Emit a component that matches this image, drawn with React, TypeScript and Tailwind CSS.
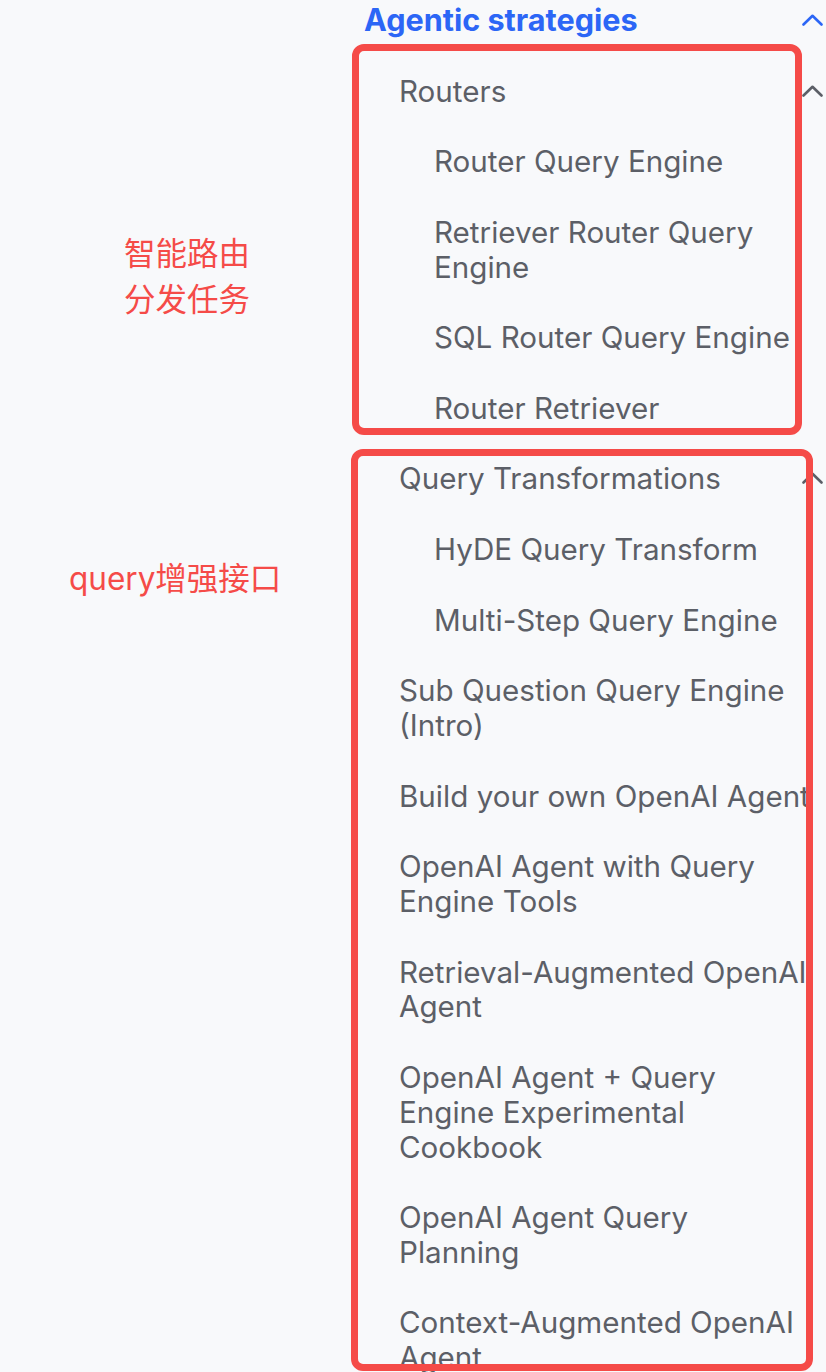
import React from 'react';

type Item = { lines: string[]; level: 1 | 2; chevron?: boolean };

const items: Item[] = [
  { lines: ['Routers'], level: 1, chevron: true },
  { lines: ['Router Query Engine'], level: 2 },
  { lines: ['Retriever Router Query', 'Engine'], level: 2 },
  { lines: ['SQL Router Query Engine'], level: 2 },
  { lines: ['Router Retriever'], level: 2 },
  { lines: ['Query Transformations'], level: 1, chevron: true },
  { lines: ['HyDE Query Transform'], level: 2 },
  { lines: ['Multi-Step Query Engine'], level: 2 },
  { lines: ['Sub Question Query Engine', '(Intro)'], level: 1 },
  { lines: ['Build your own OpenAI Agent'], level: 1 },
  { lines: ['OpenAI Agent with Query', 'Engine Tools'], level: 1 },
  { lines: ['Retrieval-Augmented OpenAI', 'Agent'], level: 1 },
  { lines: ['OpenAI Agent + Query', 'Engine Experimental', 'Cookbook'], level: 1 },
  { lines: ['OpenAI Agent Query', 'Planning'], level: 1 },
  { lines: ['Context-Augmented OpenAI', 'Agent'], level: 1 },
];

function Chevron({ className }: { className: string }) {
  return (
    <svg width="21" height="12" viewBox="0 0 21 12" fill="none" className={className}>
      <polyline points="1.5,10.5 10.5,1.8 19.5,10.5" stroke="currentColor" strokeWidth="2.6" strokeLinecap="round" strokeLinejoin="round" />
    </svg>
  );
}

export default function App() {
  return (
    <div
      className="relative h-[1372px] w-[826px] overflow-hidden bg-[#f8f9fb]"
      style={{ fontFamily: 'Inter, "Noto Sans CJK SC", sans-serif' }}
    >
      <nav className="ml-[364px] flex flex-col gap-[35.8px] pt-[3px] text-[29.6px] leading-[34.8px] text-[#5c5f67]">
        <div className="flex items-center justify-between pr-[3px]">
          <span className="whitespace-nowrap text-[30.6px] font-bold text-[#2c66f6]">Agentic strategies</span>
          <Chevron className="text-[#2c66f6]" />
        </div>
        {items.map((item) => (
          <div
            key={item.lines.join(' ')}
            className={`flex items-start justify-between pr-[3px] ${item.level === 1 ? 'pl-[35px]' : 'pl-[70px]'}`}
          >
            <div>
              {item.lines.map((line) => (
                <div key={line} className="whitespace-nowrap">
                  {line}
                </div>
              ))}
            </div>
            {item.chevron && <Chevron className="mt-[11px] shrink-0 text-[#5c5f67]" />}
          </div>
        ))}
      </nav>

      {/* annotation boxes */}
      <div className="absolute left-[352px] top-[44px] h-[391px] w-[450px] rounded-[12px] border-[7px] border-[#f54b48]" />
      <div className="absolute left-[351px] top-[449px] h-[922px] w-[462px] rounded-[12px] border-[7px] border-[#f54b48]" />

      {/* annotation labels */}
      <div className="absolute left-[124px] top-[228px] text-[31.5px] leading-[46px] text-[#f54b48]" style={{ fontFamily: '"Noto Sans CJK SC", sans-serif' }}>
        <div>智能路由</div>
        <div>分发任务</div>
      </div>
      <div className="absolute left-[69px] top-[556px] text-[31.5px] leading-[46px] text-[#f54b48]" style={{ fontFamily: 'Inter, "Noto Sans CJK SC", sans-serif' }}>
        query增强接口
      </div>
    </div>
  );
}
